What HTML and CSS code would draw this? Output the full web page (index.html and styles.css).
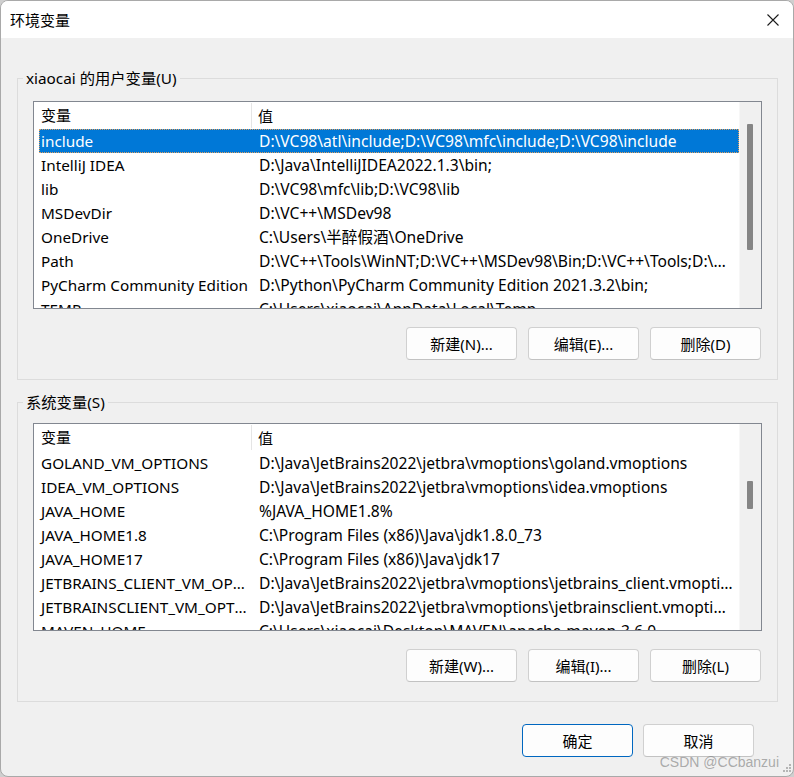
FILE: index.html
```html
<!DOCTYPE html>
<html lang="zh-CN">
<head>
    <meta charset="UTF-8">
    <meta name="viewport" content="width=device-width, initial-scale=1.0">
    <title>环境变量</title>
    <link rel="stylesheet" href="styles.css">
</head>
<body>
    <div class="window">
        <div class="titlebar">
            <span class="title">环境变量</span>
            <svg class="close" width="12" height="12" viewBox="0 0 12 12">
                <path d="M0.5 0.5 L11.5 11.5 M11.5 0.5 L0.5 11.5" stroke="#1b1b1b" stroke-width="1.1" fill="none"/>
            </svg>
        </div>

        <div class="content">
            <fieldset class="group">
                <legend>xiaocai 的用户变量(U)</legend>
                <div class="group-body">
                    <div class="list">
                        <div class="list-view">
                            <div class="list-head">
                                <span class="col-name">变量</span>
                                <span class="col-value">值</span>
                            </div>
                            <div class="row selected"><span class="cell-name">include</span><span class="cell-value">D:\VC98\atl\include;D:\VC98\mfc\include;D:\VC98\include</span></div>
                            <div class="row"><span class="cell-name">IntelliJ IDEA</span><span class="cell-value">D:\Java\IntelliJIDEA2022.1.3\bin;</span></div>
                            <div class="row"><span class="cell-name">lib</span><span class="cell-value">D:\VC98\mfc\lib;D:\VC98\lib</span></div>
                            <div class="row"><span class="cell-name">MSDevDir</span><span class="cell-value">D:\VC++\MSDev98</span></div>
                            <div class="row"><span class="cell-name">OneDrive</span><span class="cell-value">C:\Users\半醉假酒\OneDrive</span></div>
                            <div class="row"><span class="cell-name">Path</span><span class="cell-value">D:\VC++\Tools\WinNT;D:\VC++\MSDev98\Bin;D:\VC++\Tools;D:\VC98\bin;%USERPROFILE%\AppData\Local\Microsoft\WindowsApps</span></div>
                            <div class="row"><span class="cell-name">PyCharm Community Edition</span><span class="cell-value">D:\Python\PyCharm Community Edition 2021.3.2\bin;</span></div>
                            <div class="row"><span class="cell-name">TEMP</span><span class="cell-value">C:\Users\xiaocai\AppData\Local\Temp</span></div>
                            <div class="row"><span class="cell-name">TMP</span><span class="cell-value">C:\Users\xiaocai\AppData\Local\Temp</span></div>
                        </div>
                        <div class="scrollbar"><div class="thumb thumb-user"></div></div>
                    </div>
                    <div class="buttons">
                        <button class="btn">新建(N)...</button>
                        <button class="btn">编辑(E)...</button>
                        <button class="btn">删除(D)</button>
                    </div>
                </div>
            </fieldset>

            <fieldset class="group group-system">
                <legend>系统变量(S)</legend>
                <div class="group-body">
                    <div class="list">
                        <div class="list-view">
                            <div class="list-head">
                                <span class="col-name">变量</span>
                                <span class="col-value">值</span>
                            </div>
                            <div class="row"><span class="cell-name">GOLAND_VM_OPTIONS</span><span class="cell-value">D:\Java\JetBrains2022\jetbra\vmoptions\goland.vmoptions</span></div>
                            <div class="row"><span class="cell-name">IDEA_VM_OPTIONS</span><span class="cell-value">D:\Java\JetBrains2022\jetbra\vmoptions\idea.vmoptions</span></div>
                            <div class="row"><span class="cell-name">JAVA_HOME</span><span class="cell-value">%JAVA_HOME1.8%</span></div>
                            <div class="row"><span class="cell-name">JAVA_HOME1.8</span><span class="cell-value">C:\Program Files (x86)\Java\jdk1.8.0_73</span></div>
                            <div class="row"><span class="cell-name">JAVA_HOME17</span><span class="cell-value">C:\Program Files (x86)\Java\jdk17</span></div>
                            <div class="row"><span class="cell-name">JETBRAINS_CLIENT_VM_OPTIONS</span><span class="cell-value">D:\Java\JetBrains2022\jetbra\vmoptions\jetbrains_client.vmoptions</span></div>
                            <div class="row"><span class="cell-name">JETBRAINSCLIENT_VM_OPTIONS</span><span class="cell-value">D:\Java\JetBrains2022\jetbra\vmoptions\jetbrainsclient.vmoptions</span></div>
                            <div class="row"><span class="cell-name">MAVEN_HOME</span><span class="cell-value">C:\Users\xiaocai\Desktop\MAVEN\apache-maven-3.6.0</span></div>
                        </div>
                        <div class="scrollbar"><div class="thumb thumb-system"></div></div>
                    </div>
                    <div class="buttons">
                        <button class="btn">新建(W)...</button>
                        <button class="btn">编辑(I)...</button>
                        <button class="btn">删除(L)</button>
                    </div>
                </div>
            </fieldset>

            <div class="dialog-buttons">
                <button class="btn btn-default">确定</button>
                <button class="btn">取消</button>
            </div>
        </div>

        <div class="watermark">CSDN @CCbanzui</div>
        <svg class="grip" width="12" height="12" viewBox="0 0 12 12">
            <rect x="9" y="1" width="2" height="2" fill="#b5b5b5"/>
            <rect x="6" y="4" width="2" height="2" fill="#b5b5b5"/>
            <rect x="9" y="4" width="2" height="2" fill="#b5b5b5"/>
            <rect x="3" y="7" width="2" height="2" fill="#b5b5b5"/>
            <rect x="6" y="7" width="2" height="2" fill="#b5b5b5"/>
            <rect x="9" y="7" width="2" height="2" fill="#b5b5b5"/>
        </svg>
    </div>
</body>
</html>
```

FILE: styles.css
```css
* {
    box-sizing: border-box;
}
html, body {
    margin: 0;
    padding: 0;
    background: #cfcfcf;
}
body {
    font-family: "Noto Sans", "Noto Sans CJK SC", sans-serif;
    font-size: 15px;
    color: #000;
}
.window {
    position: relative;
    width: 794px;
    height: 777px;
    background: #f0f0f0;
    border: 1px solid #a9a9a9;
    border-radius: 8px;
    overflow: hidden;
}
.titlebar {
    height: 37px;
    background: #fff;
    display: flex;
    align-items: center;
    justify-content: space-between;
    padding: 0 14px 0 9px;
}
.title {
    font-family: "Noto Sans CJK SC", sans-serif;
    font-size: 15px;
    line-height: 20px;
}
.close {
    display: block;
}
.content {
    padding-top: 30px;
}
.group {
    margin: 0 15px 0 16px;
    padding: 0;
    border: 1px solid #dcdcdc;
    min-inline-size: 0;
}
.group legend {
    margin-left: 5px;
    padding: 0 3px;
    line-height: 20px;
    font-size: 15.3px;
}
.group-system {
    margin-top: 12px;
}
.group-body {
    padding: 13px 15px 19px 15px;
}
.group-system .group-body {
    padding-top: 11px;
}
.list {
    height: 208px;
    background: #fff;
    border: 1px solid #828790;
    display: flex;
}
.list-view {
    flex: 1;
    min-width: 0;
    overflow: hidden;
}
.list-head {
    height: 27px;
    display: flex;
    align-items: center;
}
.col-name {
    width: 218px;
    padding-left: 7px;
    line-height: 25px;
    border-right: 1px solid #e5e5e5;
}
.col-value {
    padding-left: 6px;
}
.row {
    display: flex;
    height: 24px;
    line-height: 24px;
    margin-left: 5px;
    font-size: 15.6px;
    white-space: nowrap;
}
.cell-name {
    width: 213px;
    flex-shrink: 0;
    padding: 0 2px 0 2px;
    font-size: 15.3px;
    overflow: hidden;
    text-overflow: ellipsis;
}
.cell-value {
    flex: 1;
    min-width: 0;
    padding: 0 6px 0 7px;
    overflow: hidden;
    text-overflow: ellipsis;
}
.row.selected {
    background: #0078d7;
    color: #fff;
    outline: 1px dotted #e0a060;
    outline-offset: -1px;
}
.scrollbar {
    width: 22px;
    flex-shrink: 0;
    background: #f0f0f0;
    border-left: 1px solid #f7f7f7;
    padding-left: 7px;
}
.thumb {
    width: 6px;
    background: #858585;
    border-radius: 1px;
}
.thumb-user {
    margin-top: 22px;
    height: 126px;
}
.thumb-system {
    margin-top: 57px;
    height: 28px;
}
.buttons {
    display: flex;
    justify-content: flex-end;
    gap: 11px;
    margin-top: 18px;
    padding-right: 1px;
}
.btn {
    width: 111px;
    height: 33px;
    padding: 0;
    font-family: "Noto Sans", "Noto Sans CJK SC", sans-serif;
    font-size: 15px;
    color: #000;
    background: #fdfdfd;
    border: 1px solid #d0d0d0;
    border-bottom-color: #c2c2c2;
    border-radius: 4px;
}
.dialog-buttons {
    display: flex;
    justify-content: flex-end;
    gap: 10px;
    margin-top: 22px;
    padding-right: 39px;
}
.btn-default {
    border: 1px solid #0067c0;
}
.watermark {
    position: absolute;
    right: 14px;
    bottom: 6px;
    font-family: "Liberation Sans", sans-serif;
    font-size: 14px;
    color: rgba(130, 130, 130, 0.65);
}
.grip {
    position: absolute;
    right: 1px;
    bottom: 1px;
}
```
